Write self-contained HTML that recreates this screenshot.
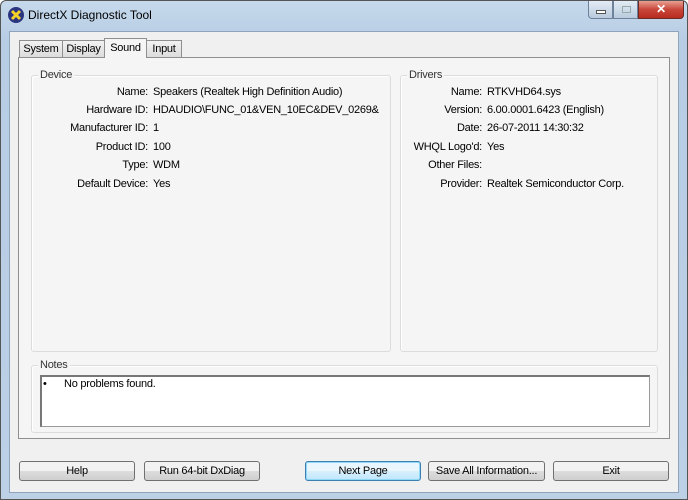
<html><head><style>
*{margin:0;padding:0;box-sizing:border-box}
body{width:688px;height:500px;overflow:hidden;font-family:"Liberation Sans",sans-serif;font-size:11px;letter-spacing:-0.25px;color:#000;background:#fff}
.win{position:absolute;left:0;top:0;width:688px;height:500px;background:linear-gradient(#c6d9ec,#b7cde3 40px,#bcd0e6);border:1px solid #555;border-radius:6px 6px 0 0}
.client{position:absolute;left:8px;top:30px;width:670px;height:462px;background:#f0f0f0;border:1px solid #8ea4bd}
.title{position:absolute;left:27px;top:7px;font-size:12px;letter-spacing:0}
.a{position:absolute}
.tab{position:absolute;top:40px;height:17px;border:1px solid #8e8f8f;border-bottom:none;background:linear-gradient(#f2f2f2,#dcdcdc);padding-top:2px;text-align:center;font-size:11px}
.panel{position:absolute;left:18px;top:57px;width:652px;height:382px;border:1px solid #8e8f8f;background:#f5f5f5}
.gb{position:absolute;border:1px solid #dcdcdc;border-radius:3px;box-shadow:inset 1px 1px 0 #fff}
.gl{position:absolute;top:-7px;left:6px;background:#f5f5f5;padding:0 2px;color:#333}
.lbl{position:absolute;text-align:right;white-space:nowrap}
.val{position:absolute;white-space:nowrap}
.btn{position:absolute;top:461px;height:20px;border:1px solid #707070;border-radius:3px;background:linear-gradient(#f2f2f2 50%,#dddddd 50%,#cfcfcf);text-align:center;line-height:18px}
</style></head><body>
<div class="win">
<svg class="a" style="left:6px;top:5px" width="18" height="18" viewBox="0 0 18 18"><circle cx="9" cy="9" r="8" fill="#2b3580"/><path d="M5 5L13 13M13 5L5 13" stroke="#f3d22a" stroke-width="3"/></svg>
<div class="title">DirectX Diagnostic Tool</div>
<div class="a" style="left:587px;top:0;width:25px;height:18px;border:1px solid #6f829b;border-top:none;border-radius:0 0 0 4px;background:linear-gradient(#e3ecf5,#b9cadd)"><div class="a" style="left:7px;top:9px;width:10px;height:4px;background:#fff;border:1px solid #555"></div></div>
<div class="a" style="left:612px;top:0;width:25px;height:18px;border:1px solid #6f829b;border-top:none;background:linear-gradient(#e3ecf5,#b9cadd)"><div class="a" style="left:8px;top:5px;width:9px;height:7px;border:1px solid #9aa;"></div></div>
<div class="a" style="left:637px;top:0;width:46px;height:18px;border:1px solid #6b2a22;border-top:none;border-radius:0 0 4px 0;background:linear-gradient(#e8a093,#c9463a 50%,#b82b1f);color:#fff;font-weight:bold;text-align:center;font-size:12px;line-height:16px">✕</div>
<div class="client"></div>
</div>
<div class="tab" style="left:19px;width:44px">System</div>
<div class="tab" style="left:62px;width:43px">Display</div>
<div class="tab" style="left:146px;width:36px">Input</div>
<div class="panel">
<div class="gb" style="left:12px;top:17px;width:360px;height:277px"><div class="gl">Device</div></div>
<div class="gb" style="left:381px;top:17px;width:258px;height:277px"><div class="gl">Drivers</div></div>
<div class="gb" style="left:12px;top:307px;width:627px;height:68px"><div class="gl">Notes</div>
<div class="a" style="left:8px;top:9px;width:610px;height:52px;background:#fff;border:1px solid #999;border-left:2px solid #777;border-top:2px solid #777"><span class="a" style="left:1px;top:1px">•</span><span class="a" style="left:22px;top:1px">No problems found.</span></div></div>
</div>
<div class="tab" style="left:104px;top:38px;height:20px;width:43px;background:#f5f5f5;padding-top:3px">Sound</div>
<div class="lbl" style="right:540px;top:86px">Name:</div><div class="val" style="left:153px;top:86px">Speakers (Realtek High Definition Audio)</div>
<div class="lbl" style="right:540px;top:104px">Hardware ID:</div><div class="val" style="left:153px;top:104px;width:226px;overflow:hidden">HDAUDIO\FUNC_01&amp;VEN_10EC&amp;DEV_0269&amp;SUBSYS</div>
<div class="lbl" style="right:540px;top:122px">Manufacturer ID:</div><div class="val" style="left:153px;top:122px">1</div>
<div class="lbl" style="right:540px;top:141px">Product ID:</div><div class="val" style="left:153px;top:141px">100</div>
<div class="lbl" style="right:540px;top:159px">Type:</div><div class="val" style="left:153px;top:159px">WDM</div>
<div class="lbl" style="right:540px;top:178px">Default Device:</div><div class="val" style="left:153px;top:178px">Yes</div>
<div class="lbl" style="right:206px;top:86px">Name:</div><div class="val" style="left:487px;top:86px">RTKVHD64.sys</div>
<div class="lbl" style="right:206px;top:104px">Version:</div><div class="val" style="left:487px;top:104px">6.00.0001.6423 (English)</div>
<div class="lbl" style="right:206px;top:122px">Date:</div><div class="val" style="left:487px;top:122px">26-07-2011 14:30:32</div>
<div class="lbl" style="right:206px;top:141px">WHQL Logo'd:</div><div class="val" style="left:487px;top:141px">Yes</div>
<div class="lbl" style="right:206px;top:159px">Other Files:</div>
<div class="lbl" style="right:206px;top:178px">Provider:</div><div class="val" style="left:487px;top:178px">Realtek Semiconductor Corp.</div>
<div class="btn" style="left:19px;width:116px">Help</div>
<div class="btn" style="left:144px;width:116px">Run 64-bit DxDiag</div>
<div class="btn" style="left:305px;width:116px;border-color:#3c7fb1;box-shadow:inset 0 0 0 1px #8fd8f8;background:linear-gradient(#eaf6fd 50%,#d9f0fc 50%,#bee6fd)">Next Page</div>
<div class="btn" style="left:428px;width:117px">Save All Information...</div>
<div class="btn" style="left:553px;width:116px">Exit</div>
</body></html>
